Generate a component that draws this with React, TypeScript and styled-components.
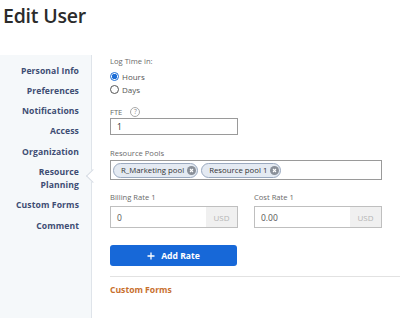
import styled, { createGlobalStyle } from 'styled-components';

const GlobalStyle = createGlobalStyle`
  html, body {
    margin: 0;
    padding: 0;
    background: #fff;
  }
  * {
    box-sizing: border-box;
  }
`;

const Page = styled.div`
  width: 400px;
  height: 318px;
  overflow: hidden;
  font-family: 'Open Sans', 'Liberation Sans', sans-serif;
  color: #333;
  display: flex;
  flex-direction: column;
`;

const Header = styled.h1`
  margin: 0;
  height: 55px;
  padding: 1px 0 0 3px;
  font-size: 19.5px;
  font-weight: 600;
  line-height: 30px;
  letter-spacing: -0.2px;
  color: #2b2b2b;
`;

const Body = styled.div`
  flex: 1;
  display: flex;
`;

const Sidebar = styled.nav`
  position: relative;
  width: 92px;
  flex-shrink: 0;
  background: #f5f8fa;
  border-right: 1px solid #dfe4ea;
  padding: 9.5px 12px 0 0;
  display: flex;
  flex-direction: column;
  align-items: flex-end;
  gap: 7.3px;
`;

const NavItem = styled.a`
  position: relative;
  display: block;
  text-align: right;
  font-size: 8.6px;
  font-weight: 700;
  line-height: 13px;
  color: #3e4d73;
  text-decoration: none;
  letter-spacing: 0.1px;
`;

// white notch pointing into the sidebar at the active item
const Notch = styled.span`
  position: absolute;
  right: -14px;
  top: 5px;
  width: 10px;
  height: 10px;
  background: #fff;
  border-left: 1px solid #d6dce4;
  border-bottom: 1px solid #d6dce4;
  transform: translateX(50%) rotate(45deg);
`;

const Content = styled.main`
  flex: 1;
  padding: 0 19px 0 18px;
  display: flex;
  flex-direction: column;
`;

const Label = styled.div`
  font-size: 7.6px;
  line-height: 12px;
  color: #6a6a6a;
  display: flex;
  align-items: center;
  gap: 8px;
`;

const RadioGroup = styled.div`
  display: flex;
  flex-direction: column;
  margin-top: 3px;
`;

const RadioRow = styled.label`
  display: flex;
  align-items: center;
  gap: 3px;
  height: 13px;
  font-size: 8px;
  color: #555;
`;

const RadioDot = styled.span<{ checked?: boolean }>`
  width: 9px;
  height: 9px;
  border-radius: 50%;
  border: 1px solid ${(p) => (p.checked ? '#1f6fd6' : '#555')};
  background: ${(p) => (p.checked ? 'radial-gradient(circle, #1f6fd6 0 2.5px, #fff 3px)' : '#fff')};
`;

const HelpIcon = styled.span`
  width: 10px;
  height: 10px;
  border-radius: 50%;
  border: 1px solid #aaa;
  font-size: 6.5px;
  line-height: 8px;
  text-align: center;
  color: #888;
`;

const TextBox = styled.div`
  width: 128px;
  height: 17px;
  border: 1px solid #9a9a9a;
  background: #fff;
  font-size: 8.5px;
  color: #333;
  display: flex;
  align-items: center;
  padding-left: 6px;
`;

const PoolBox = styled.div`
  height: 20px;
  border: 1px solid #9a9a9a;
  display: flex;
  align-items: center;
  gap: 3px;
  padding-left: 2px;
  margin-top: 1px;
`;

const Chip = styled.span`
  height: 15px;
  border: 1px solid #9aa9bf;
  border-radius: 8px;
  background: #e4eaf2;
  display: flex;
  align-items: center;
  gap: 3px;
  padding: 0 1px 0 7px;
  font-size: 7.8px;
  color: #333;
`;

const ChipClose = styled.span`
  width: 9px;
  height: 9px;
  border-radius: 50%;
  background: #8a9099;
  display: flex;
  align-items: center;
  justify-content: center;
`;

const RateRow = styled.div`
  display: flex;
  gap: 16px;
  margin-top: 11px;
`;

const RateField = styled.div`
  width: 128px;
  display: flex;
  flex-direction: column;
  gap: 3px;
`;

const RateInput = styled.div`
  height: 22px;
  border: 1px solid #bfbfbf;
  display: flex;
  font-size: 8.5px;
`;

const RateValue = styled.span`
  flex: 1;
  display: flex;
  align-items: center;
  padding-left: 6px;
  color: #555;
`;

const Suffix = styled.span`
  width: 31px;
  background: #f0f0f0;
  color: #b5b5b5;
  display: flex;
  align-items: center;
  justify-content: center;
  font-size: 8px;
`;

const AddButton = styled.button`
  margin-top: 17px;
  width: 127px;
  height: 21px;
  border: none;
  border-radius: 3px;
  background: #1768d8;
  color: #fff;
  font-family: inherit;
  font-size: 8.6px;
  font-weight: 700;
  display: flex;
  align-items: center;
  justify-content: center;
  gap: 6px;
  padding: 0;
`;

const Divider = styled.hr`
  margin: 10px -19px 0 0;
  border: none;
  border-top: 1px solid #e2e2e2;
`;

const SectionTitle = styled.div`
  margin-top: 7px;
  font-size: 8.6px;
  font-weight: 700;
  color: #c8702e;
  line-height: 12px;
`;

const navItems = ['Personal Info', 'Preferences', 'Notifications', 'Access', 'Organization', 'Resource\nPlanning', 'Custom Forms', 'Comment'];

const CloseIcon = () => (
  <ChipClose>
    <svg width="5" height="5" viewBox="0 0 5 5">
      <path d="M1 1L4 4M4 1L1 4" stroke="#fff" strokeWidth="1.1" />
    </svg>
  </ChipClose>
);

export default function App() {
  return (
    <>
      <GlobalStyle />
      <Page>
        <Header>Edit User</Header>
        <Body>
          <Sidebar>
            {navItems.map((item) => (
              <NavItem key={item}>
                {item.split('\n').map((line) => (
                  <div key={line}>{line}</div>
                ))}
                {item.startsWith('Resource') && <Notch />}
              </NavItem>
            ))}
          </Sidebar>
          <Content>
            <Label>Log Time in:</Label>
            <RadioGroup>
              <RadioRow>
                <RadioDot checked /> Hours
              </RadioRow>
              <RadioRow>
                <RadioDot /> Days
              </RadioRow>
            </RadioGroup>
            <Label style={{ marginTop: 10 }}>
              FTE <HelpIcon>?</HelpIcon>
            </Label>
            <TextBox>1</TextBox>
            <Label style={{ marginTop: 12 }}>Resource Pools</Label>
            <PoolBox>
              <Chip>
                R_Marketing pool
                <CloseIcon />
              </Chip>
              <Chip>
                Resource pool 1
                <CloseIcon />
              </Chip>
            </PoolBox>
            <RateRow>
              <RateField>
                <Label>Billing Rate 1</Label>
                <RateInput>
                  <RateValue>0</RateValue>
                  <Suffix>USD</Suffix>
                </RateInput>
              </RateField>
              <RateField>
                <Label>Cost Rate 1</Label>
                <RateInput>
                  <RateValue>0.00</RateValue>
                  <Suffix>USD</Suffix>
                </RateInput>
              </RateField>
            </RateRow>
            <AddButton>
              <svg width="8" height="8" viewBox="0 0 8 8">
                <path d="M4 0.5V7.5M0.5 4H7.5" stroke="#fff" strokeWidth="1.3" />
              </svg>
              Add Rate
            </AddButton>
            <Divider />
            <SectionTitle>Custom Forms</SectionTitle>
          </Content>
        </Body>
      </Page>
    </>
  );
}
